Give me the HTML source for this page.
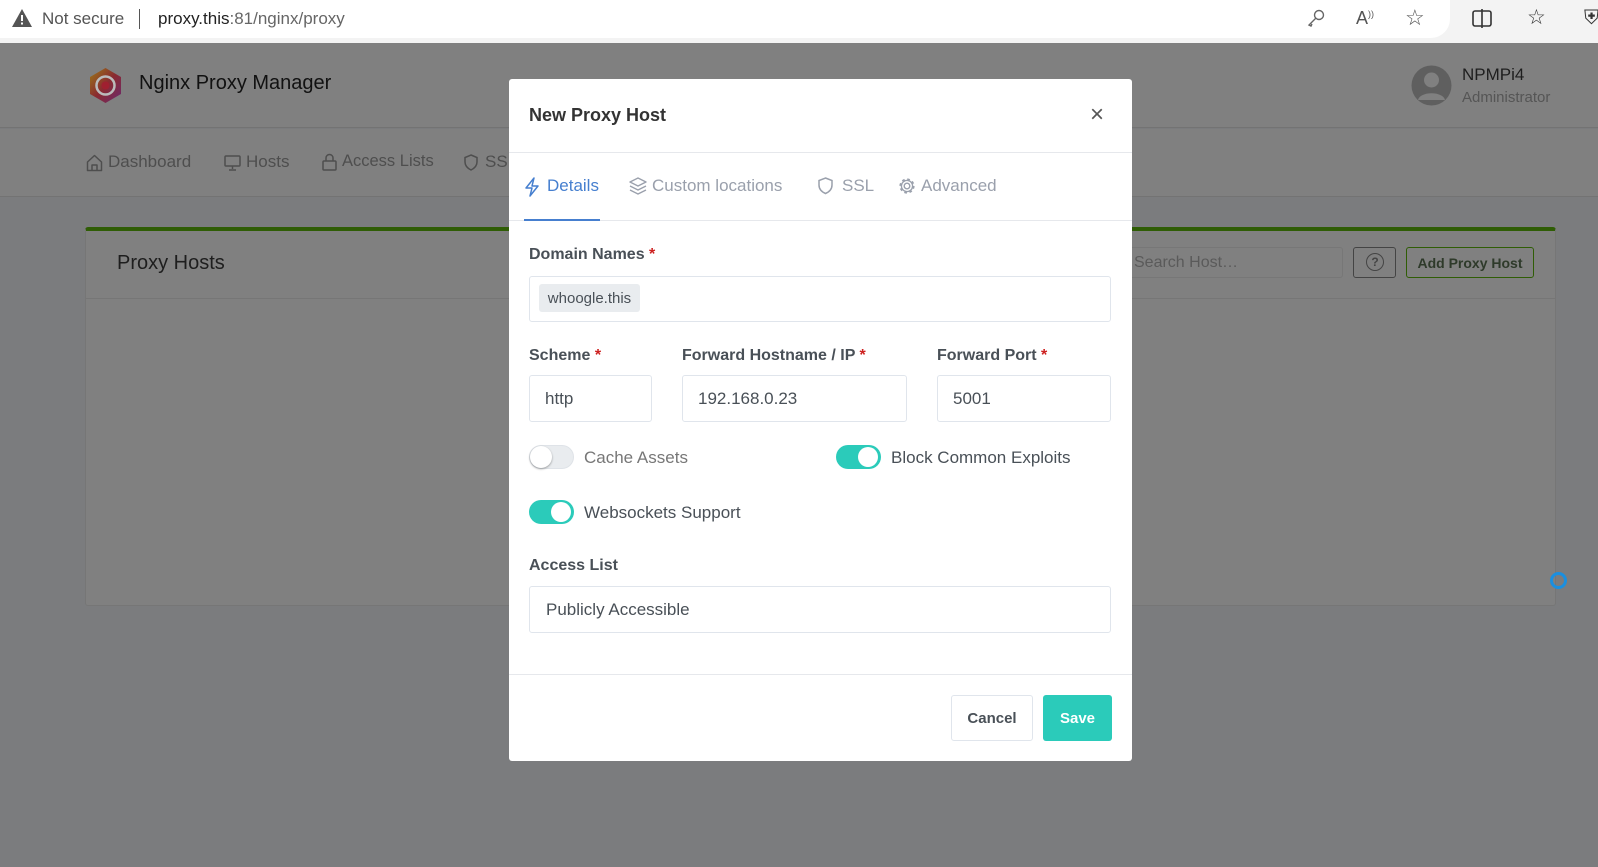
<!DOCTYPE html>
<html><head><meta charset="utf-8"><style>
*{box-sizing:border-box;margin:0;padding:0}
body{width:1598px;height:867px;overflow:hidden;position:relative;background:#7b7c7e;font-family:"Liberation Sans",sans-serif;color:#333}
.a{position:absolute;white-space:nowrap}
.ic{position:absolute}
</style></head><body>
<div class="a" style="left:0;top:0;width:1598px;height:43px;background:#f3f3f3"></div>
<div class="a" style="left:0;top:0;width:1450px;height:38px;background:#fff;border-radius:0 0 19px 0"></div>
<svg class="ic" style="left:11px;top:8px" width="22" height="20" viewBox="0 0 22 20"><path d="M11 1L21 19H1Z" fill="#555"/><rect x="10" y="7" width="2" height="6" fill="#fff"/><rect x="10" y="14.5" width="2" height="2" fill="#fff"/></svg>
<div class="a" style="left:42px;top:9px;font-size:17px;color:#555">Not secure</div>
<div class="a" style="left:139px;top:9px;width:1px;height:20px;background:#555"></div>
<div class="a" style="left:158px;top:9px;font-size:17px;color:#222">proxy.this<span style="color:#666">:81/nginx/proxy</span></div>
<svg class="ic" style="left:1306px;top:8px" width="20" height="20"><circle cx="13" cy="7" r="4.5" fill="none" stroke="#666" stroke-width="1.4"/><path d="M10 10L3 17l2 1 1-2" fill="none" stroke="#666" stroke-width="1.4"/></svg>
<div class="a" style="left:1356px;top:8px;font-size:18px;color:#555">A<sup style="font-size:9px">))</sup></div>
<div class="a" style="left:1405px;top:5px;font-size:22px;color:#555">☆</div>
<svg class="ic" style="left:1472px;top:9px" width="20" height="19"><rect x="1" y="2" width="18" height="15" rx="2" fill="none" stroke="#333" stroke-width="1.6"/><line x1="10" y1="0" x2="10" y2="19" stroke="#333" stroke-width="1.6"/></svg>
<div class="a" style="left:1527px;top:5px;font-size:21px;color:#333">☆</div>
<div class="a" style="left:1584px;top:7px;font-size:20px;color:#333">⛨</div>
<div class="a" style="left:0;top:43px;width:1598px;height:85px;background:#808080;border-bottom:1px solid #737373"></div>
<svg class="ic" style="left:88px;top:67px" width="35" height="37" viewBox="0 0 35 37"><defs><linearGradient id="g" x1="0" y1="0" x2="1" y2="1"><stop offset="0" stop-color="#9a7a15"/><stop offset=".5" stop-color="#8a2a30"/><stop offset="1" stop-color="#6a2a70"/></linearGradient></defs><path d="M17.5 1L33 10V27L17.5 36L2 27V10Z" fill="url(#g)"/><circle cx="17.5" cy="18.5" r="9" fill="none" stroke="#bbb" stroke-width="2.5"/><circle cx="17.5" cy="18.5" r="4" fill="#a02030"/></svg>
<div class="a" style="left:139px;top:72px;font-size:20px;color:#111">Nginx Proxy Manager</div>
<svg class="ic" style="left:1411px;top:65px" width="41" height="41" viewBox="0 0 41 41"><circle cx="20.5" cy="20.5" r="20" fill="#5f5f5f"/><circle cx="20.5" cy="15" r="7.5" fill="#808080"/><path d="M7 35C9 26 32 26 34 35Z" fill="#808080"/></svg>
<div class="a" style="left:1462px;top:65px;font-size:17px;color:#1e1e1e">NPMPi4</div>
<div class="a" style="left:1462px;top:89px;font-size:15px;color:#555">Administrator</div>
<div class="a" style="left:0;top:129px;width:1598px;height:68px;background:#808080;border-bottom:1px solid #737373"></div>
<svg class="ic" style="left:86px;top:154px" width="17" height="18"><path d="M1.5 8L8.5 1.5 15.5 8V16.5H1.5Z M6 16.5V11h5v5.5" fill="none" stroke="#4e4e4e" stroke-width="1.5" stroke-linejoin="round"/></svg>
<div class="a" style="left:108px;top:152px;font-size:17px;color:#4e4e4e">Dashboard</div>
<svg class="ic" style="left:224px;top:155px" width="17" height="16"><rect x="1" y="1" width="15" height="10" rx="1" fill="none" stroke="#4e4e4e" stroke-width="1.5"/><path d="M8.5 11v3M5 15h7" stroke="#4e4e4e" stroke-width="1.5"/></svg>
<div class="a" style="left:246px;top:152px;font-size:17px;color:#4e4e4e">Hosts</div>
<svg class="ic" style="left:322px;top:153px" width="15" height="18"><rect x="1" y="8" width="13" height="9" rx="1" fill="none" stroke="#4e4e4e" stroke-width="1.5"/><path d="M4 8V5a3.5 3.5 0 0 1 7 0v3" fill="none" stroke="#4e4e4e" stroke-width="1.5"/></svg>
<div class="a" style="left:342px;top:152px;font-size:16.5px;color:#4e4e4e">Access Lists</div>
<svg class="ic" style="left:464px;top:154px" width="14" height="17"><path d="M7 1L13 3.5V8c0 4-3 6.5-6 8C4 14.5 1 12 1 8V3.5Z" fill="none" stroke="#4e4e4e" stroke-width="1.5"/></svg>
<div class="a" style="left:485px;top:152px;font-size:17px;color:#4e4e4e">SSL</div>
<div class="a" style="left:85px;top:227px;width:1471px;height:379px;background:#808080;border:1px solid #767676;border-top:4px solid #2f5d05;border-radius:3px"></div>
<div class="a" style="left:85px;top:298px;width:1471px;height:1px;background:#767676"></div>
<div class="a" style="left:117px;top:252px;font-size:20px;color:#1e1e1e">Proxy Hosts</div>
<div class="a" style="left:1126px;top:247px;width:217px;height:31px;border:1px solid #777;border-radius:3px;background:#808080"></div>
<div class="a" style="left:1134px;top:254px;font-size:16px;color:#5a5a5a">Search Host…</div>
<div class="a" style="left:1353px;top:247px;width:43px;height:31px;border:1px solid #444;border-radius:3px"></div>
<div class="a" style="left:1366px;top:253px;width:18px;height:18px;border:1.5px solid #444;border-radius:50%;font-size:12px;text-align:center;line-height:16px;color:#444;font-weight:bold">?</div>
<div class="a" style="left:1406px;top:247px;width:128px;height:31px;border:1px solid #2f5d05;border-radius:3px;font-size:14px;font-weight:bold;color:#2e3a2a;text-align:center;line-height:30px">Add Proxy Host</div>
<div class="a" style="left:1550px;top:572px;width:17px;height:17px;border:3px solid #1a8fe0;border-radius:50%"></div>
<div class="a" style="left:509px;top:79px;width:623px;height:682px;background:#fff;border-radius:3px"></div>
<div class="a" style="left:529px;top:105px;font-size:18px;font-weight:bold;color:#333">New Proxy Host</div>
<div class="a" style="left:1090px;top:101px;font-size:24px;color:#555">×</div>
<div class="a" style="left:509px;top:152px;width:623px;height:1px;background:#e6e8ec"></div>
<svg class="ic" style="left:524px;top:177px" width="16" height="20"><path d="M10 1L2 11h6l-2 8 8-10H8Z" fill="none" stroke="#467fcf" stroke-width="1.5" stroke-linejoin="round"/></svg>
<div class="a" style="left:547px;top:176px;font-size:17px;color:#467fcf">Details</div>
<svg class="ic" style="left:629px;top:177px" width="18" height="18"><path d="M9 1L17 5 9 9 1 5Z M1 9l8 4 8-4 M1 13l8 4 8-4" fill="none" stroke="#9aa0ac" stroke-width="1.4" stroke-linejoin="round"/></svg>
<div class="a" style="left:652px;top:176px;font-size:17px;color:#9aa0ac">Custom locations</div>
<svg class="ic" style="left:818px;top:177px" width="15" height="18"><path d="M7.5 1L14 3.5V8c0 4.5-3 7-6.5 8.5C4 15 1 12.5 1 8V3.5Z" fill="none" stroke="#9aa0ac" stroke-width="1.5"/></svg>
<div class="a" style="left:842px;top:176px;font-size:17px;color:#9aa0ac">SSL</div>
<svg class="ic" style="left:898px;top:177px" width="18" height="18" viewBox="0 0 18 18"><circle cx="9" cy="9" r="2.8" fill="none" stroke="#9aa0ac" stroke-width="1.4"/><circle cx="9" cy="9" r="6.3" fill="none" stroke="#9aa0ac" stroke-width="2.6" stroke-dasharray="2.5 2.45"/><circle cx="9" cy="9" r="5.6" fill="none" stroke="#9aa0ac" stroke-width="1.3"/></svg>
<div class="a" style="left:921px;top:176px;font-size:17px;color:#9aa0ac">Advanced</div>
<div class="a" style="left:509px;top:220px;width:623px;height:1px;background:#e6e8ec"></div>
<div class="a" style="left:524px;top:219px;width:76px;height:2px;background:#467fcf"></div>
<div class="a" style="left:529px;top:246px;font-size:16px;font-weight:bold;color:#495057">Domain Names <span style="color:#cd201f">*</span></div>
<div class="a" style="left:529px;top:276px;width:582px;height:46px;border:1px solid #e0e5ec;border-radius:3px"></div>
<div class="a" style="left:539px;top:284px;width:101px;height:28px;background:#e9ecef;border-radius:3px;font-size:15px;color:#495057;line-height:30px;text-align:center">whoogle.this</div>
<div class="a" style="left:529px;top:347px;font-size:16px;font-weight:bold;color:#495057">Scheme <span style="color:#cd201f">*</span></div>
<div class="a" style="left:682px;top:347px;font-size:16px;font-weight:bold;color:#495057">Forward Hostname / IP <span style="color:#cd201f">*</span></div>
<div class="a" style="left:937px;top:347px;font-size:16px;font-weight:bold;color:#495057">Forward Port <span style="color:#cd201f">*</span></div>
<div class="a" style="left:529px;top:375px;width:123px;height:47px;border:1px solid #e0e5ec;border-radius:3px;font-size:17px;color:#495057;padding:13px 0 0 15px">http</div>
<div class="a" style="left:682px;top:375px;width:225px;height:47px;border:1px solid #e0e5ec;border-radius:3px;font-size:17px;color:#495057;padding:13px 0 0 15px">192.168.0.23</div>
<div class="a" style="left:937px;top:375px;width:174px;height:47px;border:1px solid #e0e5ec;border-radius:3px;font-size:17px;color:#495057;padding:13px 0 0 15px">5001</div>
<div class="a" style="left:529px;top:445px;width:45px;height:24px;border-radius:12px;background:#e9ecef;border:1px solid #dfe3e8"></div>
<div class="a" style="left:530px;top:446px;width:22px;height:22px;border-radius:50%;background:#fff;box-shadow:0 1px 2px rgba(0,0,0,.35)"></div>
<div class="a" style="left:584px;top:448px;font-size:17px;color:#777">Cache Assets</div>
<div class="a" style="left:836px;top:445px;width:45px;height:24px;border-radius:12px;background:#2bcbba"></div>
<div class="a" style="left:858px;top:447px;width:20px;height:20px;border-radius:50%;background:#fff"></div>
<div class="a" style="left:891px;top:448px;font-size:17px;color:#495057">Block Common Exploits</div>
<div class="a" style="left:529px;top:500px;width:45px;height:24px;border-radius:12px;background:#2bcbba"></div>
<div class="a" style="left:551px;top:502px;width:20px;height:20px;border-radius:50%;background:#fff"></div>
<div class="a" style="left:584px;top:503px;font-size:17px;color:#495057">Websockets Support</div>
<div class="a" style="left:529px;top:557px;font-size:16px;font-weight:bold;color:#495057">Access List</div>
<div class="a" style="left:529px;top:586px;width:582px;height:47px;border:1px solid #e0e5ec;border-radius:3px;font-size:17px;color:#495057;padding:13px 0 0 16px">Publicly Accessible</div>
<div class="a" style="left:509px;top:674px;width:623px;height:1px;background:#e6e8ec"></div>
<div class="a" style="left:951px;top:695px;width:82px;height:46px;border:1px solid #e0e5ec;border-radius:3px;font-size:15px;font-weight:bold;color:#495057;text-align:center;line-height:46px">Cancel</div>
<div class="a" style="left:1043px;top:695px;width:69px;height:46px;background:#2bcbba;border-radius:3px;font-size:15px;font-weight:bold;color:#fff;text-align:center;line-height:47px">Save</div>
</body></html>
